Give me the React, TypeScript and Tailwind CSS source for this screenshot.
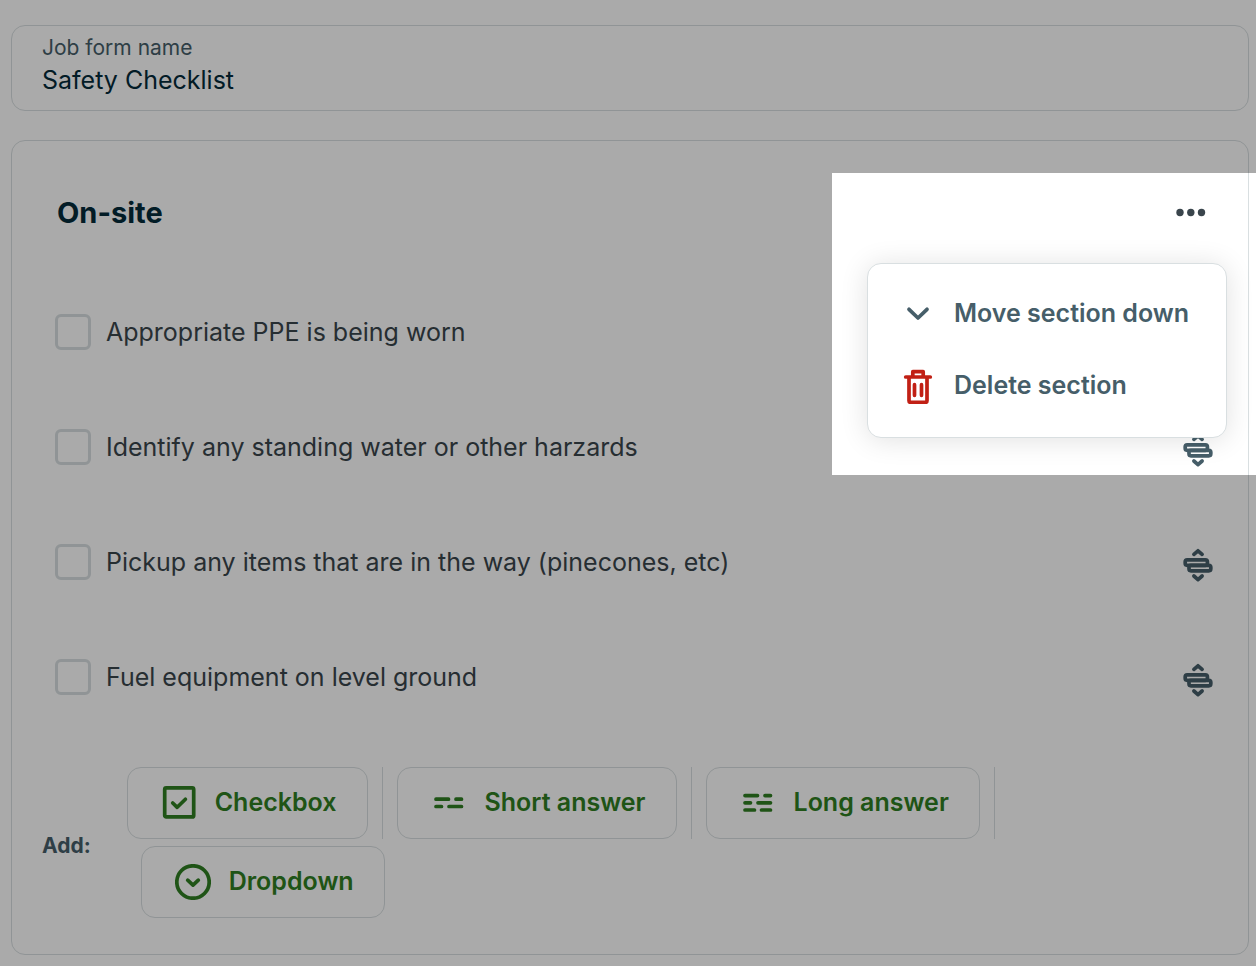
import type { ReactNode } from "react";

const items = [
  { id: "ppe", text: "Appropriate PPE is being worn" },
  { id: "water", text: "Identify any standing water or other harzards" },
  { id: "pickup", text: "Pickup any items that are in the way (pinecones, etc)" },
  { id: "fuel", text: "Fuel equipment on level ground" },
];

function Icon({ children }: { children: ReactNode }) {
  return (
    <svg
      viewBox="0 0 36 36"
      className="size-9 shrink-0"
      fill="none"
      stroke="currentColor"
      strokeWidth={3.7}
      strokeLinecap="round"
      strokeLinejoin="round"
      aria-hidden="true"
    >
      {children}
    </svg>
  );
}

const addButtons = [
  {
    name: "Checkbox",
    icon: (
      <>
        <rect x="3.7" y="2.9" width="29" height="29" rx="1.5" />
        <path d="M11.7 18l4.5 4.3 8.2-8" />
      </>
    ),
  },
  {
    name: "Short answer",
    icon: <path d="M5 14.2h12.5M25 14.2h5.5M5 21.5h5.5M18 21.5h12.5" />,
  },
  {
    name: "Long answer",
    icon: <path d="M5 10.6h12.5M25 10.6h5.5M5 17.8h5.5M18 17.8h12.5M5 25h9.5M21.5 25h9" />,
  },
  {
    name: "Dropdown",
    icon: (
      <>
        <circle cx="18" cy="18" r="16.2" />
        <path d="M12.7 16.2l5.3 4.9 5.3-4.9" />
      </>
    ),
  },
];

function SectionMenu() {
  return (
    <div className="relative">
      <button type="button" aria-label="Section options" className="block text-[#3a454c]">
        <svg viewBox="0 0 36 36" className="size-9" fill="currentColor" aria-hidden="true">
          <circle cx="7" cy="17.5" r="3.7" />
          <circle cx="17.8" cy="17.5" r="3.7" />
          <circle cx="28.5" cy="17.5" r="3.7" />
        </svg>
      </button>

      <div className="absolute top-full right-[-18px] z-10 mt-8 w-[360px] rounded-[14px] border border-[#d9dfe1] bg-white pt-[14px] pb-[15px] text-[25px] font-semibold text-[#465e69] shadow-[0_2px_28px_rgba(0,0,0,0.12)]">
        <button type="button" className="flex h-[72px] w-full items-center gap-[18px] pl-8">
          <Icon>
            <path d="M9 13.3l9 8.7 9-8.7" />
          </Icon>
          Move section down
        </button>
        <button type="button" className="flex h-[72px] w-full items-center gap-[18px] pl-8">
          <span className="text-[#c12015]">
            <Icon>
              <path d="M5.7 9h24.6M12.8 8V3.7h10.4V8M9 9.5v23.2c0 1.2.5 1.7 1.7 1.7h14.6c1.2 0 1.7-.5 1.7-1.7V9.5" />
              <path d="M14.5 16.7v10.6M21.5 16.7v10.6" />
            </Icon>
          </span>
          Delete section
        </button>
      </div>
    </div>
  );
}

export default function App() {
  return (
    <div className="relative min-h-screen overflow-hidden bg-white pt-[25px] pr-[7px] pb-[11px] pl-[11px] font-['Inter',sans-serif]">
      {/* Form name */}
      <div className="rounded-[14px] border border-[#d9dfe1] px-[30px] pt-2 pb-3">
        <label htmlFor="form-name" className="block text-[21px] leading-7 text-[#465e69]">
          Job form name
        </label>
        <input
          id="form-name"
          type="text"
          defaultValue="Safety Checklist"
          className="block w-full bg-transparent text-[25px] leading-9 text-[#032b3a] outline-none"
        />
      </div>

      {/* Section */}
      <section className="mt-[29px] rounded-[14px] border border-[#d9dfe1]">
        <div className="flex items-center justify-between pt-[54px] pr-[39px] pb-[43px] pl-[45px]">
          <h2 className="text-[29px] leading-9 font-bold text-[#032b3a]">On-site</h2>
          <SectionMenu />
        </div>

        <ul>
          {items.map((item) => (
            <li key={item.id} className="flex h-[115px] items-center pr-8 pl-[43px]">
              <input
                id={item.id}
                type="checkbox"
                className="size-9 shrink-0 appearance-none rounded-md border-3 border-[#d9dfe1]"
              />
              <label htmlFor={item.id} className="grow pl-[15px] text-[25px] leading-9 text-[#3a454c]">
                {item.text}
              </label>
              <button type="button" aria-label="Reorder item" className="mt-2 text-[#465e69]">
                <Icon>
                  <path d="M13.9 6.4L18 2.8l4.1 3.6M13.9 28l4.1 3.6 4.1-3.6" />
                  <rect x="5.2" y="11.8" width="22.2" height="5.5" rx="2" />
                  <rect x="9" y="17.3" width="21.8" height="5.5" rx="2" />
                </Icon>
              </button>
            </li>
          ))}
        </ul>

        <div className="flex items-center gap-9 px-[30px] pt-[33px] pb-9">
          <span className="pt-1.5 text-[21px] leading-7 font-bold text-[#465e69]">Add:</span>
          <ul className="flex flex-wrap gap-y-[7px]">
            {addButtons.map((button) => (
              <li
                key={button.name}
                className="border-r border-[#d9dfe1] px-[14px] first:pl-0 last:border-r-0"
              >
                <button
                  type="button"
                  className="flex h-[72px] items-center gap-[18px] rounded-[14px] border border-[#d9dfe1] pr-[30px] pl-[33px] text-[25px] font-semibold text-[#2f7e22]"
                >
                  <Icon>{button.icon}</Icon>
                  {button.name}
                </button>
              </li>
            ))}
          </ul>
        </div>
      </section>

      {/* Dimmed page with a highlighted window round the menu */}
      <div className="pointer-events-none absolute top-[173px] right-0 z-20 h-[302px] w-[424px] shadow-[0_0_0_2000px_rgba(0,0,0,0.333)]" />
    </div>
  );
}
